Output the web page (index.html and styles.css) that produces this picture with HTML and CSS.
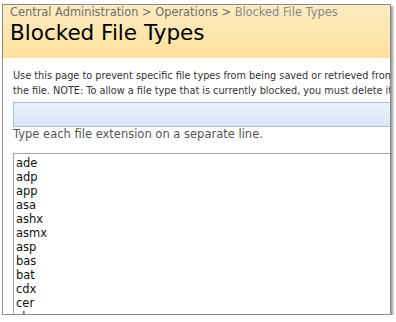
FILE: index.html
```html
<!DOCTYPE html>
<html lang="en">
<head>
  <meta charset="UTF-8" />
  <title>Blocked File Types</title>
  <link rel="stylesheet" href="styles.css">
</head>
<body>

  <div class="shot">
    <!-- page header -->
    <div class="header">
      <div class="crumbs">Central Administration &gt; Operations &gt; <span class="current">Blocked File Types</span></div>
      <h1>Blocked File Types</h1>
    </div>

    <div class="body">
      <p class="intro">Use this page to prevent specific file types from being saved or retrieved from any Web server.<br>the file. NOTE: To allow a file type that is currently blocked, you must delete it from the list.</p>

      <div class="section-bar"></div>

      <p class="hint">Type each file extension on a separate line.</p>

      <div class="ext-list">
        <div>ade</div>
        <div>adp</div>
        <div>app</div>
        <div>asa</div>
        <div>ashx</div>
        <div>asmx</div>
        <div>asp</div>
        <div>bas</div>
        <div>bat</div>
        <div>cdx</div>
        <div>cer</div>
        <div>chm</div>
        <div>class</div>
      </div>
    </div>
  </div>

</body>
</html>
```

FILE: styles.css
```css
body {
  margin: 0;
  background: #fff;
  font-family: "DejaVu Sans", Verdana, sans-serif;
}

.shot {
  margin: 4px 0 0 2px;
  width: 387px;
  height: 309px;
  border: 1px solid #8c8c8c;
  box-shadow: 2px 2px 2px #9a9a9a;
  overflow: hidden;
  background: #fff;
}

.header {
  height: 53px;
  padding: 0 0 0 7px;
  background: linear-gradient(#fcecc2, #fee29c);
}

.crumbs {
  font-size: 11.4px;
  color: #6e6e6e;
  white-space: nowrap;
}

.crumbs .current {
  color: #8a8a8a;
}

h1 {
  margin: 1px 0 0;
  font-size: 21.5px;
  font-weight: normal;
  color: #000;
}

.body {
  padding: 10px 0 0 10px;
}

.intro {
  margin: 0;
  font-family: "DejaVu Sans Condensed", "DejaVu Sans", sans-serif;
  font-size: 10.8px;
  line-height: 15px;
  color: #333;
  white-space: nowrap;
}

.section-bar {
  margin-top: 4px;
  height: 23px;
  border: 1px solid #a8bfd5;
  border-right: none;
  background: linear-gradient(#e9f2fc, #d6e7f8);
}

.hint {
  margin: 0;
  font-size: 11.5px;
  line-height: 15px;
  color: #555;
}

.ext-list {
  margin-top: 11px;
  padding: 2px 2px;
  border: 1px solid #a5a5a5;
  border-right: none;
  font-size: 11.5px;
  line-height: 14px;
  color: #111;
}
```
